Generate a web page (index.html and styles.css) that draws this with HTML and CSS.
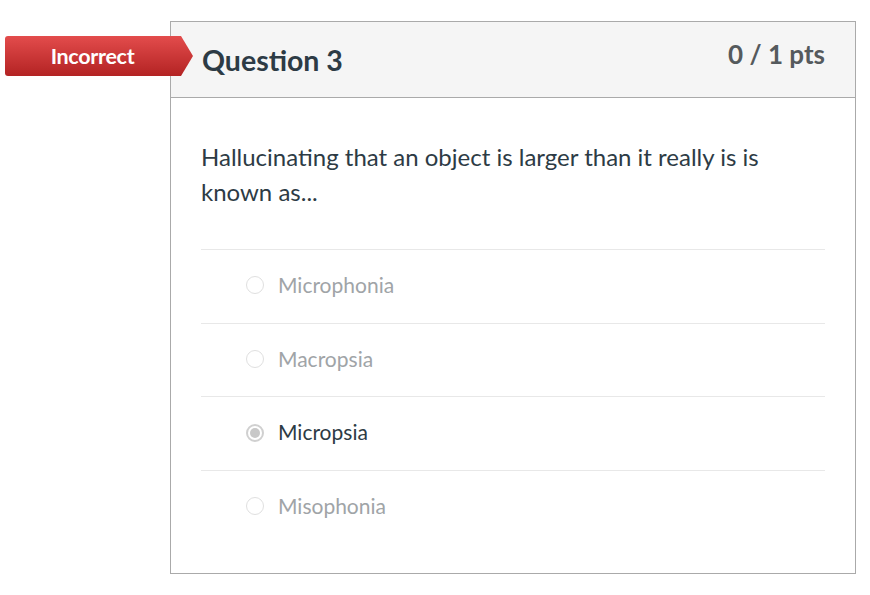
FILE: index.html
```html
<!DOCTYPE html>
<html>
<head>
<meta charset="utf-8">
<link rel="stylesheet" href="styles.css">
</head>
<body>
<div class="flag">Incorrect</div>
<div class="card">
  <div class="header">
    <h2 class="title">Question 3</h2>
    <div class="pts">0 / 1 pts</div>
  </div>
  <div class="body">
    <p class="question">Hallucinating that an object is larger than it really is is known as...</p>
    <div class="answers">
      <div class="answer"><span class="radio"></span><span class="label">Microphonia</span></div>
      <div class="answer"><span class="radio"></span><span class="label">Macropsia</span></div>
      <div class="answer selected"><span class="radio"></span><span class="label">Micropsia</span></div>
      <div class="answer"><span class="radio"></span><span class="label">Misophonia</span></div>
    </div>
  </div>
</div>
</body>
</html>
```
FILE: styles.css
```css
html, body {
  margin: 0;
  padding: 0;
  background: #fff;
  font-family: Lato, "Open Sans", sans-serif;
}
body {
  position: relative;
  padding: 21px 0 0 170px;
}
.flag {
  position: absolute;
  left: 5px;
  top: 36px;
  width: 188px;
  height: 40px;
  box-sizing: border-box;
  padding-right: 13px;
  background: linear-gradient(#e34c4c, #b32323);
  border-radius: 3px 0 0 3px;
  clip-path: polygon(0 0, 176px 0, 188px 50%, 176px 100%, 0 100%);
  color: #fff;
  font-weight: 700;
  font-size: 21.5px;
  display: flex;
  align-items: center;
  justify-content: center;
  letter-spacing: -0.3px;
}
.card {
  width: 684px;
  border: 1px solid #aaa;
  background: #fff;
}
.header {
  height: 75px;
  background: #f5f5f5;
  border-bottom: 1px solid #aaa;
  display: flex;
  justify-content: space-between;
  padding: 0 30px 0 31px;
}
.title {
  margin: 0;
  padding-top: 21px;
  font-size: 28.5px;
  font-weight: 700;
  color: #2d3b45;
}
.pts {
  padding-top: 16px;
  font-size: 26px;
  font-weight: 700;
  color: #555a5d;
}
.body {
  padding: 41px 30px 29px 30px;
}
.question {
  margin: 0 0 40px;
  font-size: 24px;
  line-height: 35px;
  color: #2d3b45;
}
.answer {
  height: 72.7px;
  border-top: 1px solid #e8e8e8;
  display: flex;
  align-items: center;
  padding-left: 45px;
}
.radio {
  width: 18px;
  height: 18px;
  box-sizing: border-box;
  border: 1px solid #e0e0e0;
  border-radius: 50%;
  background: #fff;
  margin-right: 14px;
  margin-bottom: 2px;
  position: relative;
}
.selected .radio {
  border: 2px solid #d0d0d0;
  background: #fff;
}
.selected .radio::after {
  content: "";
  position: absolute;
  left: 2px;
  top: 2px;
  width: 10px;
  height: 10px;
  border-radius: 50%;
  background: #c8c8c8;
}
.label {
  font-size: 21px;
  color: #a0a4a7;
  margin-bottom: 4px;
}
.selected .label {
  color: #2d3b45;
}
```
